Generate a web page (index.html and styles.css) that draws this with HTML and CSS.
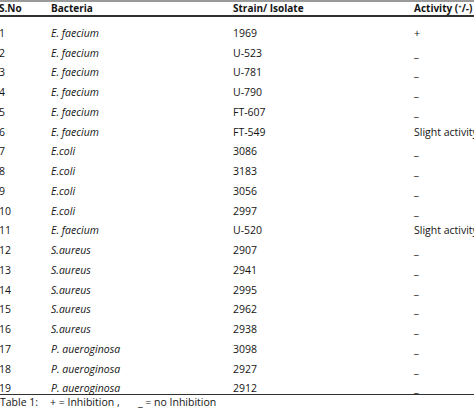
FILE: index.html
```html
<!DOCTYPE html>
<html>
<head>
<meta charset="utf-8">
<link rel="stylesheet" href="styles.css">
</head>
<body>
<div class="page">
  <div class="topbar"></div>
  <div class="row head">
    <div class="c1">S.No</div><div class="c2">Bacteria</div><div class="c3">Strain/ Isolate</div><div class="c4">Activity (<sup>+</sup>/-)</div>
  </div>
  <div class="body">
    <div class="row"><div class="c1">1</div><div class="c2 i">E. faecium</div><div class="c3">1969</div><div class="c4">+</div></div>
    <div class="row"><div class="c1">2</div><div class="c2 i">E. faecium</div><div class="c3">U-523</div><div class="c4">_</div></div>
    <div class="row"><div class="c1">3</div><div class="c2 i">E. faecium</div><div class="c3">U-781</div><div class="c4">_</div></div>
    <div class="row"><div class="c1">4</div><div class="c2 i">E. faecium</div><div class="c3">U-790</div><div class="c4">_</div></div>
    <div class="row"><div class="c1">5</div><div class="c2 i">E. faecium</div><div class="c3">FT-607</div><div class="c4">_</div></div>
    <div class="row"><div class="c1">6</div><div class="c2 i">E. faecium</div><div class="c3">FT-549</div><div class="c4">Slight activity</div></div>
    <div class="row"><div class="c1">7</div><div class="c2 i">E.coli</div><div class="c3">3086</div><div class="c4">_</div></div>
    <div class="row"><div class="c1">8</div><div class="c2 i">E.coli</div><div class="c3">3183</div><div class="c4">_</div></div>
    <div class="row"><div class="c1">9</div><div class="c2 i">E.coli</div><div class="c3">3056</div><div class="c4">_</div></div>
    <div class="row"><div class="c1">10</div><div class="c2 i">E.coli</div><div class="c3">2997</div><div class="c4">_</div></div>
    <div class="row"><div class="c1">11</div><div class="c2 i">E. faecium</div><div class="c3">U-520</div><div class="c4">Slight activity</div></div>
    <div class="row"><div class="c1">12</div><div class="c2 i">S.aureus</div><div class="c3">2907</div><div class="c4">_</div></div>
    <div class="row"><div class="c1">13</div><div class="c2 i">S.aureus</div><div class="c3">2941</div><div class="c4">_</div></div>
    <div class="row"><div class="c1">14</div><div class="c2 i">S.aureus</div><div class="c3">2995</div><div class="c4">_</div></div>
    <div class="row"><div class="c1">15</div><div class="c2 i">S.aureus</div><div class="c3">2962</div><div class="c4">_</div></div>
    <div class="row"><div class="c1">16</div><div class="c2 i">S.aureus</div><div class="c3">2938</div><div class="c4">_</div></div>
    <div class="row"><div class="c1">17</div><div class="c2 i">P. aueroginosa</div><div class="c3">3098</div><div class="c4">_</div></div>
    <div class="row"><div class="c1">18</div><div class="c2 i">P. aueroginosa</div><div class="c3">2927</div><div class="c4">_</div></div>
    <div class="row"><div class="c1">19</div><div class="c2 i">P. aueroginosa</div><div class="c3">2912</div><div class="c4">_</div></div>
  </div>
  <div class="foot">
    <span class="f1">Table 1:</span><span class="f2">+ = Inhibition ,</span><span class="f3">_ = no Inhibition</span>
  </div>
</div>
</body>
</html>
```

FILE: styles.css
```css
html, body {
  margin: 0;
  padding: 0;
  background: #ffffff;
}
body {
  width: 474px;
  height: 409px;
  overflow: hidden;
  font-family: "Open Sans", "Noto Sans", sans-serif;
  font-size: 10.5px;
  color: #141414;
}
.page {
  width: 474px;
}
.topbar {
  height: 2px;
  background: #9a9a9a;
}
.row {
  display: grid;
  grid-template-columns: 51px 182px 181px 60px;
  white-space: nowrap;
}
.head {
  height: 13px;
  line-height: 12px;
  font-size: 10px;
  font-weight: 700;
  border-bottom: 2px solid #303030;
}
.head sup {
  font-size: 6px;
  vertical-align: 3px;
  line-height: 0;
}
.body {
  padding-top: 2px;
  border-bottom: 1.5px solid #303030;
}
.body .row {
  padding-top: 7.75px;
  line-height: 12px;
}
.c1 {
  margin-left: -1px;
}
.i {
  font-style: italic;
}
.foot {
  display: flex;
  line-height: 12px;
  padding-top: 1px;
}
.f1 {
  width: 50px;
}
.f2 {
  width: 88px;
}
```
